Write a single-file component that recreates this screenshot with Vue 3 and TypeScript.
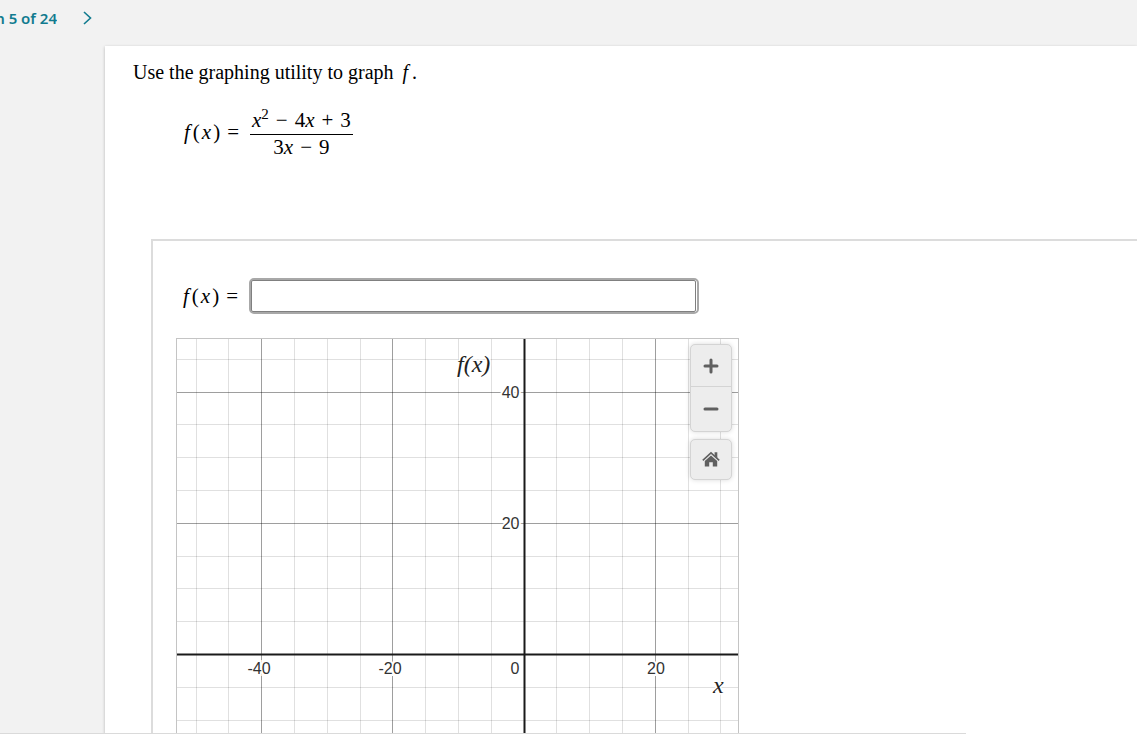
<script setup lang="ts">
import { computed, ref } from 'vue'

interface Line {
  key: number
  pos: number
  major: boolean
}

const width = 561
const height = 460
const originX = 347.5
const originY = 315.5
const unitsPerLine = 5
const defaultStep = 32.8
const step = ref(defaultStep)
const answer = ref('')

function buildLines(origin: number, extent: number): Line[] {
  const first = Math.ceil(-origin / step.value)
  const last = Math.floor((extent - origin) / step.value)
  const lines: Line[] = []
  for (let i = first; i <= last; i++) {
    if (i !== 0) lines.push({ key: i, pos: Math.floor(origin + i * step.value), major: i % 4 === 0 })
  }
  return lines
}

const vertical = computed(() => buildLines(originX - 0.5, width))
const horizontal = computed(() => buildLines(originY, height))
const xLabels = computed(() => vertical.value.filter((l) => l.major))
const yLabels = computed(() => horizontal.value.filter((l) => l.major && l.key < 0))

function zoomBy(factor: number) {
  step.value = Math.min(80, Math.max(16, step.value * factor))
}
function home() {
  step.value = defaultStep
}
</script>

<template>
  <div class="page">
    <header class="topbar">
      <div class="position"><span>Question 5 of 24</span></div>
      <button class="next" type="button" aria-label="Next question">
        <svg width="10" height="14" viewBox="0 0 10 14"><path d="M2 1 8.500 7 2 13" /></svg>
      </button>
    </header>

    <main class="sheet">
      <p class="prompt">Use the graphing utility to graph <i>f</i>.</p>

      <div class="formula math">
        <span class="term"><i class="fn">f</i>(<i class="arg">x</i>)<span class="equals">=</span></span>
        <span class="fraction">
          <span class="numerator"><i>x</i><sup>2</sup><span class="op">−</span>4<i>x</i><span class="op">+</span>3</span>
          <span class="denominator">3<i>x</i><span class="op">−</span>9</span>
        </span>
      </div>

      <section class="panel">
        <div class="entry math">
          <label class="term" for="answer"><i class="fn">f</i>(<i class="arg">x</i>)<span class="equals">=</span></label>
          <span class="field"><input id="answer" v-model="answer" type="text" autocomplete="off" /></span>
        </div>

        <div class="graph">
          <svg class="plane" :width="width" :height="height" :viewBox="`0 0 ${width} ${height}`" role="img" aria-label="Coordinate plane">
            <g>
              <line v-for="l in vertical" :key="'v' + l.key" :class="l.major ? 'major' : 'minor'" :x1="l.pos + 0.5" :x2="l.pos + 0.5" y1="0" :y2="height" />
              <line v-for="l in horizontal" :key="'h' + l.key" :class="l.major ? 'major' : 'minor'" x1="0" :x2="width" :y1="l.pos + 0.5" :y2="l.pos + 0.5" />
            </g>
            <line class="axis" :x1="originX" :x2="originX" y1="0" :y2="height" />
            <line class="axis" x1="0" :x2="width" :y1="originY" :y2="originY" />
            <g class="numbers">
              <text v-for="l in xLabels" :key="'x' + l.key" :x="l.key < 0 ? l.pos - 2 : l.pos + 1" :y="originY + 19" text-anchor="middle">{{ l.key * unitsPerLine }}</text>
              <text v-for="l in yLabels" :key="'y' + l.key" :x="originX - 5" :y="l.pos + 6" text-anchor="end">{{ -l.key * unitsPerLine }}</text>
              <text :x="originX - 5" :y="originY + 19" text-anchor="end">0</text>
            </g>
            <g class="names">
              <text x="280" y="33">f(x)</text>
              <text x="536" y="354">x</text>
            </g>
          </svg>

          <div class="tools">
            <div class="zoom">
              <button type="button" aria-label="Zoom in" @click="zoomBy(1.25)">
                <svg width="16" height="16" viewBox="0 0 16 16"><path class="stroke" d="M2 8h12M8 2v12" /></svg>
              </button>
              <button type="button" aria-label="Zoom out" @click="zoomBy(0.8)">
                <svg width="16" height="16" viewBox="0 0 16 16"><path class="stroke" d="M2 8h12" /></svg>
              </button>
            </div>
            <button class="home" type="button" aria-label="Default view" @click="home">
              <svg width="18" height="18" viewBox="0 0 18 18">
                <path class="roof" d="M0.800 9.300 9 1.800l8.200 7.500" />
                <path class="solid" d="M12.600 1.200h2.700v6l-2.700-2.500zM9 4.500l6.200 5.600V15.500h-4.400v-4.300H7.200v4.300H2.800v-5.400z" />
              </svg>
            </button>
          </div>
        </div>
      </section>
    </main>
    <div class="bottom-line"></div>
  </div>
</template>

<style>
body {
  margin: 0;
}
</style>

<style scoped>
.page {
  position: relative;
  display: flex;
  flex-direction: column;
  height: 100vh;
  overflow: hidden;
  background: #f2f2f2;
  color: #000;
  font-family: "Liberation Serif", "Times New Roman", serif;
  font-size: 20px;
}

button {
  display: flex;
  align-items: center;
  justify-content: center;
  margin: 0;
  padding: 0;
  border: 0;
  background: none;
  cursor: pointer;
}

.topbar {
  display: flex;
  flex: none;
  align-items: center;
  gap: 20px;
  height: 36px;
  margin-bottom: 10px;
  color: #117b8f;
  font: 600 15px/20px "Noto Sans", sans-serif;
}

.position {
  display: flex;
  justify-content: flex-end;
  width: 57px;
  overflow: hidden;
  white-space: nowrap;
}

.next {
  width: 20px;
  height: 24px;
}

.next path {
  fill: none;
  stroke: #117b8f;
  stroke-width: 1.6;
}

.sheet {
  flex: 1;
  min-height: 0;
  margin-left: 105px;
  padding: 14px 0 0 28px;
  overflow: hidden;
  background: #fff;
  box-shadow: 0 1px 3px rgba(0, 0, 0, 0.25);
}

.prompt {
  margin: 0;
  line-height: 24px;
}

.prompt i {
  margin: 0 4px;
}

.math {
  font-size: 21px;
}

.term {
  white-space: nowrap;
}

.fn {
  margin-right: 3px;
}

.arg {
  margin: 0 2px;
}

.equals {
  margin-left: 7px;
}

.op {
  margin: 0 7px;
}

.formula {
  display: flex;
  align-items: center;
  gap: 11px;
  margin: 22px 0 0 51px;
}

.fraction {
  display: flex;
  flex-direction: column;
  align-items: center;
}

.numerator {
  align-self: stretch;
  padding: 0 2px;
  border-bottom: 1px solid #000;
  line-height: 28px;
}

.numerator sup {
  font-size: 15px;
  line-height: 0;
}

.denominator {
  line-height: 24px;
}

.panel {
  margin: 80px 0 0 18px;
  padding: 37px 0 0 23px;
  border: 2px solid #dcdcdc;
  border-right: 0;
  border-bottom: 0;
}

.entry {
  display: flex;
  align-items: center;
  gap: 11px;
  padding-left: 7px;
}

.field {
  display: flex;
  box-sizing: border-box;
  width: 450px;
  height: 36px;
  padding-right: 1px;
  border: 2px solid #a8a8a8;
  border-radius: 5px;
}

.field input {
  box-sizing: border-box;
  width: 100%;
  padding: 0 8px;
  border: 1px solid #808080;
  border-radius: 2px;
  outline: 0;
  background: #fff;
  font: inherit;
}

.graph {
  position: relative;
  width: 561px;
  margin-top: 24px;
  border: 1px solid #c4c4c4;
}

.plane {
  display: block;
}

.minor {
  stroke: #000;
  stroke-opacity: 0.12;
}

.major {
  stroke: #000;
  stroke-opacity: 0.38;
}

.axis {
  stroke: #1a1a1a;
  stroke-width: 2;
}

.numbers {
  fill: #333;
  stroke: #fff;
  stroke-width: 4px;
  paint-order: stroke;
  font: 16px "Liberation Sans", Arial, sans-serif;
}

.names {
  fill: #222;
  stroke: #fff;
  stroke-width: 3px;
  paint-order: stroke;
  font: italic 24px "Liberation Serif", "Times New Roman", serif;
}

.tools {
  position: absolute;
  top: 5px;
  right: 6px;
  display: flex;
  flex-direction: column;
  gap: 7px;
}

.zoom,
.home {
  box-sizing: border-box;
  width: 42px;
  border: 1px solid #d4d4d4;
  border-radius: 5px;
  background: #ededed;
  box-shadow: 0 0 5px rgba(0, 0, 0, 0.15);
}

.zoom button {
  width: 100%;
  height: 41px;
}

.zoom button + button {
  height: 45px;
  border-top: 1px solid #d4d4d4;
}

.home {
  height: 41px;
}

.stroke {
  fill: none;
  stroke: #606060;
  stroke-width: 3;
  stroke-linecap: round;
}

.roof {
  fill: none;
  stroke: #606060;
  stroke-width: 1.6;
}

.solid {
  fill: #606060;
}

.bottom-line {
  position: absolute;
  bottom: 0;
  left: 0;
  width: 85%;
  height: 1px;
  background: #dadada;
}
</style>
